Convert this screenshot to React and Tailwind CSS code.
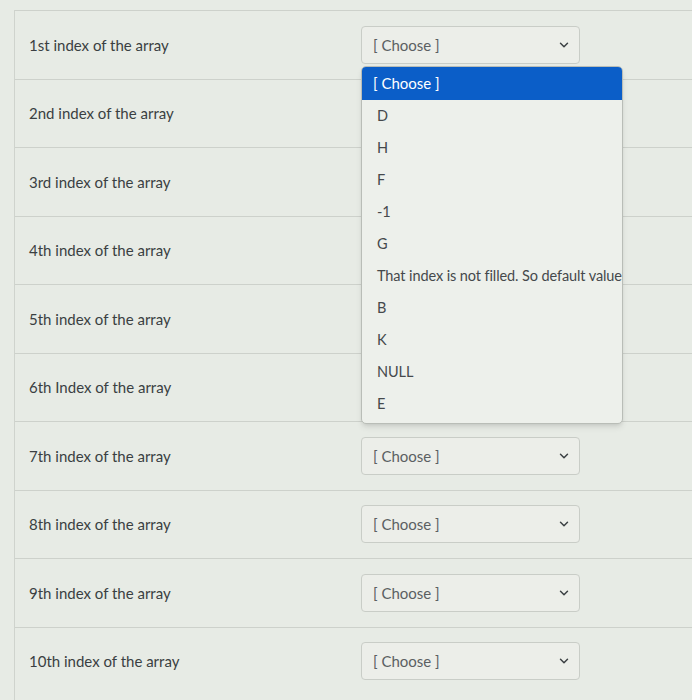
import { ChevronDown } from 'lucide-react'

const ROWS = [
  '1st index of the array',
  '2nd index of the array',
  '3rd index of the array',
  '4th index of the array',
  '5th index of the array',
  '6th Index of the array',
  '7th index of the array',
  '8th index of the array',
  '9th index of the array',
  '10th index of the array',
]

const OPTIONS = [
  'D',
  'H',
  'F',
  '-1',
  'G',
  'That index is not filled. So default value',
  'B',
  'K',
  'NULL',
  'E',
]

function Select({ open, hidden }) {
  return (
    <div className={`relative w-[219px] ${hidden ? 'invisible' : ''}`}>
      <div className="h-[38px] flex items-center justify-between pl-[11px] pr-[8px] border border-[#c9cdc7] rounded-[4px] bg-[#eceee9] text-[15px] text-[#5b6062]">
        <span>[ Choose ]</span>
        <ChevronDown size={14} strokeWidth={2.5} className="text-[#3b4043]" />
      </div>
      {open && (
        <div className="visible absolute left-0 top-[40px] z-10 w-[262px] bg-[#edf0eb] border border-[#b9bdb7] rounded-[5px] shadow-md pb-[3px] overflow-hidden">
          <div className="h-[33px] flex items-center px-[11px] bg-[#0b5ec8] text-white text-[15px]">
            [ Choose ]
          </div>
          {OPTIONS.map((o, i) => (
            <div key={i} className="h-[32px] flex items-center px-[15px] text-[14.5px] text-[#45494c] whitespace-nowrap tracking-[-0.1px]">
              {o}
            </div>
          ))}
        </div>
      )}
    </div>
  )
}

export default function App() {
  return (
    <div
      className="w-[692px] h-[700px] overflow-hidden bg-[#e7ebe5] pt-[10px]"
      style={{ fontFamily: 'Lato, "Open Sans", sans-serif' }}
    >
      <div className="ml-[14px] border-l border-[#cfd3cd] h-full">
        {ROWS.map((label, i) => (
          <div
            key={i}
            className="h-[68.5px] flex items-center border-t border-[#cdd1cb] pl-[14px]"
          >
            <div className="w-[332px] text-[15px] text-[#3a3f42]">{label}</div>
            <Select open={i === 0} hidden={i >= 1 && i <= 5} />
          </div>
        ))}
      </div>
    </div>
  )
}
